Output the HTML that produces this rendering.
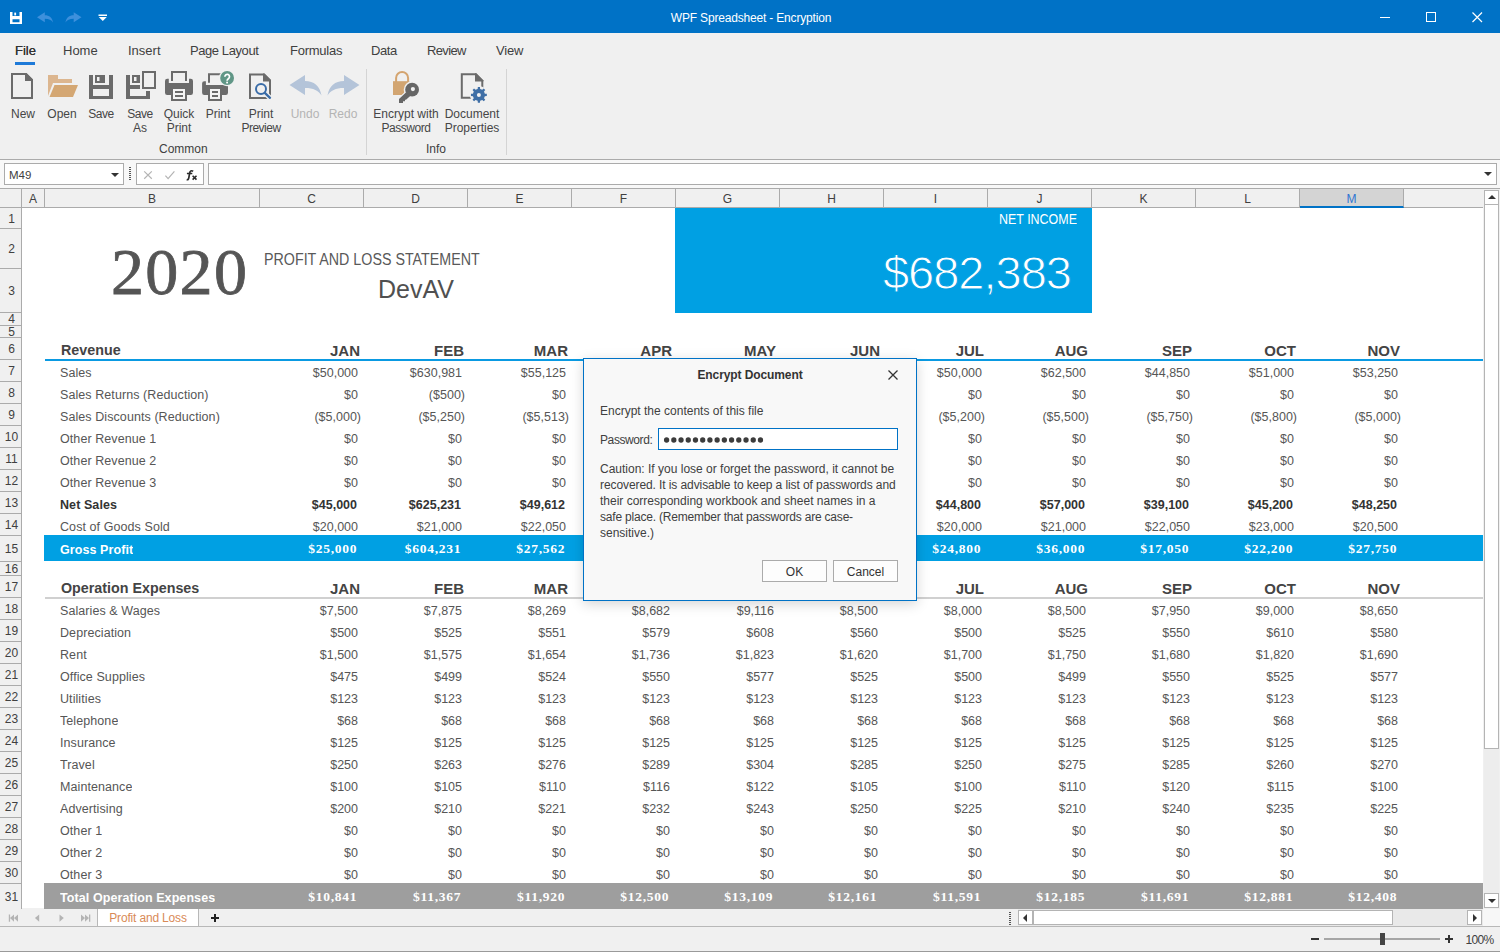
<!DOCTYPE html>
<html>
<head>
<meta charset="utf-8">
<title>WPF Spreadsheet - Encryption</title>
<style>
*{box-sizing:border-box;margin:0;padding:0}
html,body{width:1500px;height:952px;overflow:hidden;background:#f0f0f0}
body{font-family:"Liberation Sans",sans-serif;font-size:12px;color:#444;position:relative}
.abs{position:absolute}
/* title bar */
#title{position:absolute;left:0;top:0;width:1500px;height:33px;background:#0072c6}
#title .t{position:absolute;left:0;width:1502px;top:0;height:33px;line-height:36px;text-align:center;color:#fff;font-size:12px;letter-spacing:-0.180px}
/* ribbon */
#ribbon{position:absolute;left:0;top:33px;width:1500px;height:127px;background:#f0f0f0;border-bottom:1px solid #ababab}
.tab{position:absolute;top:43px;height:16px;line-height:16px;font-size:13px;color:#404040;white-space:nowrap}
.rl{position:absolute;top:107px;font-size:12px;line-height:14px;color:#464646;text-align:center;white-space:nowrap}
.rl.dis{color:#b4b4b4}
.gcap{position:absolute;top:142px;font-size:12px;line-height:14px;color:#404040;white-space:nowrap}
.gsep{position:absolute;top:69px;width:1px;height:86px;background:#d4d4d4}
/* formula bar */
#fbar{position:absolute;left:0;top:160px;width:1500px;height:29px;background:#f8f8f8}
.box{position:absolute;background:#fff;border:1px solid #ababab}
/* grid */
#sheet{position:absolute;left:21px;top:208px;width:1462px;height:700px;background:#fff}
.ch{position:absolute;top:188px;height:20px;line-height:20px;text-align:center;font-size:12px;color:#404040;border-top:1px solid #ababab;border-bottom:1px solid #ababab;border-right:1px solid #ababab;background:#f0f0f0}
.ch.sel{background:#d4d4d4;color:#2e75d2;border-bottom:2px solid #0072c6}
.rh{position:absolute;left:0;width:22px;text-align:center;font-size:12px;color:#404040;border-bottom:1px solid #ababab;border-right:1px solid #ababab;background:#f0f0f0;padding-left:2px;overflow:hidden}
.sec{position:absolute;left:61px;height:22px;line-height:26px;font-size:14.300px;font-weight:bold;color:#444;white-space:nowrap}
.mon{position:absolute;width:104px;height:22px;line-height:27px;font-size:15px;font-weight:bold;color:#444;text-align:right;padding-right:3px}
.lbl{position:absolute;left:60px;font-size:12.5px;letter-spacing:0.080px;color:#565656;white-space:nowrap;overflow:hidden}
.lbl.b{font-weight:bold;color:#333}
.lbl.gp,.lbl.tot{font-weight:bold;color:#fff;padding-top:1px}
.num{position:absolute;width:104px;text-align:right;font-size:12.5px;color:#565656;white-space:nowrap;overflow:hidden}
.num.b{font-weight:bold;color:#333}
.num.gp,.num.tot{font-family:"Liberation Serif",serif;font-weight:bold;color:#fff;font-size:13.500px;letter-spacing:0.720px}
.band{position:absolute;left:44px;width:1439px}
.band.gp{background:#00a0e3}
.band.tot{background:#9e9e9e}
.dt{font-size:12px;line-height:15px;color:#404040;white-space:nowrap}
.btn{width:65px;height:22px;line-height:23px;text-align:center;font-size:12px;color:#333;background:#fdfdfd;border:1px solid #ababab}
</style>
</head>
<body>
<!-- TITLE BAR -->
<div id="title">
  <div class="t">WPF Spreadsheet - Encryption</div>
  <svg class="abs" style="left:0;top:0" width="120" height="33" viewBox="0 0 120 33">
    <path d="M10 12h12v12h-12z M12.500 12v4h7v-4z M12.500 19.300h7v3h-7z" fill="#fff" fill-rule="evenodd"/>
    <rect x="14.300" y="12.600" width="1.800" height="2.800" fill="#fff"/>
    <path d="M37 17.300l7.800-5v3c4.500 0 7.500 2.500 8.200 7.200c-1.500-2.500-4-3.700-8.200-3.700v3.500z" fill="#3d90dc"/>
    <path d="M81.500 17.300l-7.800-5v3c-4.500 0-7.500 2.500-8.200 7.200c1.500-2.500 4-3.700 8.200-3.700v3.500z" fill="#3d90dc"/>
    <path d="M98.500 14.500h8.500v1.500h-8.500z M98.800 17h8l-4 4z" fill="#fff"/>
  </svg>
  <svg class="abs" style="left:1370px;top:0" width="130" height="33" viewBox="0 0 130 33">
    <path d="M10 17.500h10" stroke="#fff" stroke-width="1" fill="none"/>
    <rect x="56.500" y="12.500" width="9" height="9" stroke="#fff" stroke-width="1" fill="none"/>
    <path d="M102.500 12.500l9.500 9.500M112 12.500l-9.500 9.500" stroke="#fff" stroke-width="1.200" fill="none"/>
  </svg>
</div>

<!-- RIBBON -->
<div id="ribbon"></div>
<div class="tab" style="left:15px;color:#333;text-shadow:0 0 0.3px #333">File</div>
<div class="abs" style="left:15px;top:62px;width:20px;height:3px;background:#1e7ad8"></div>
<div class="tab" style="left:63px">Home</div>
<div class="tab" style="left:128px">Insert</div>
<div class="tab" style="left:190px;letter-spacing:-0.420px">Page Layout</div>
<div class="tab" style="left:290px;letter-spacing:-0.250px">Formulas</div>
<div class="tab" style="left:371px;letter-spacing:-0.400px">Data</div>
<div class="tab" style="left:427px;letter-spacing:-0.650px">Review</div>
<div class="tab" style="left:496px;letter-spacing:-0.150px">View</div>

<svg class="abs" style="left:0;top:0" width="520" height="110" viewBox="0 0 520 110">
  <!-- New -->
  <path d="M12 74h14l6 6v18h-20z" fill="none" stroke="#6b6b6b" stroke-width="2"/>
  <path d="M25 73h1.500l6.500 6.500v1.500h-8z" fill="#6b6b6b"/>
  <!-- Open -->
  <path d="M48 75h10v4h14v4h-19l-5 13z" fill="#dcb68f"/>
  <path d="M54.500 85h23.500l-5 12h-23.500z" fill="#d4a773"/>
  <!-- Save -->
  <g id="floppy">
  <path d="M89 75h24v24h-24z M93 75v10h16v-10z M93 89h16v7h-16z" fill="#6b6b6b" fill-rule="evenodd"/>
  <path d="M95 75h10v8h-10z M97 77v4h2.500v-4z" fill="#6b6b6b" fill-rule="evenodd"/>
  </g>
  <!-- Save As -->
  <path d="M126 75h24v24h-24z M130 75v10h16v-10z M130 89h16v7h-16z" fill="#6b6b6b" fill-rule="evenodd"/>
  <path d="M132 75h10v8h-10z M134 77v4h2.500v-4z" fill="#6b6b6b" fill-rule="evenodd"/>
  <rect x="140" y="69" width="18" height="22" fill="#f0f0f0"/>
  <rect x="143" y="72" width="12" height="16" fill="none" stroke="#6b6b6b" stroke-width="2"/>
  <!-- Quick Print -->
  <path d="M172 81v-9h14v9" fill="none" stroke="#6b6b6b" stroke-width="2"/>
  <path d="M167.200 78.800h1.600v4.200h20.200v-4.200h1.800a2.200 2.200 0 0 1 2.200 2.200v11.800a2.200 2.200 0 0 1 -2.200 2.200h-23.600a2.200 2.200 0 0 1 -2.200 -2.200v-11.800a2.200 2.200 0 0 1 2.200 -2.200z" fill="#6b6b6b"/>
  <path d="M171 89h16v12h-16z" fill="#6b6b6b"/>
  <path d="M173 89h12v10h-12z" fill="#f4f4f4"/>
  <path d="M175 92h8M175 96h8" stroke="#6b6b6b" stroke-width="2"/>
  <!-- Print -->
  <path d="M209 82.800v-8.600h13" fill="none" stroke="#6b6b6b" stroke-width="2"/>
  <path d="M204.300 81.200h1.600v3.800h22.100v7.800a2.200 2.200 0 0 1 -2.200 2.200h-21.500a2.200 2.200 0 0 1 -2.200 -2.200v-9.400a2.200 2.200 0 0 1 2.200 -2.200z" fill="#6b6b6b"/>
  <path d="M208 89h14v12h-14z" fill="#6b6b6b"/>
  <path d="M210 89h10v10h-10z" fill="#f4f4f4"/>
  <path d="M212 92h6M212 96h6" stroke="#6b6b6b" stroke-width="2"/>
  <circle cx="227.100" cy="78" r="8.300" fill="#f0f0f0"/>
  <circle cx="227.100" cy="78" r="6.900" fill="#609686"/>
  <path d="M224.900 76.700a2.300 2.300 0 1 1 3.700 1.800c-1 0.700-1.500 1.200-1.500 2.300" fill="none" stroke="#fff" stroke-width="1.700"/><rect x="226.200" y="81.700" width="1.800" height="1.700" fill="#fff"/>
  <!-- Print Preview -->
  <path d="M250 74.500h14l6 6v17.500h-20z" fill="none" stroke="#6b6b6b" stroke-width="2"/>
  <path d="M263 73.500h1.500l6.500 6.500v1.500h-8z" fill="#6b6b6b"/>
  <path d="M264 92l8 8" stroke="#f0f0f0" stroke-width="5"/>
  <circle cx="261" cy="89" r="5" fill="#f0f0f0" stroke="#3a6ca8" stroke-width="2"/>
  <path d="M264.800 92.800l5.200 5" stroke="#3a6ca8" stroke-width="2.300" stroke-linecap="round"/>
  <!-- Undo -->
  <path d="M289.500 85l15.500-10v6c9 0 15 5 16.500 14.500c-3-5-8-7.500-16.500-7.500v7z" fill="#b4c4d9"/>
  <!-- Redo -->
  <path d="M359.500 85l-15.500-10v6c-9 0-15 5-16.500 14.500c3-5 8-7.500 16.500-7.500v7z" fill="#b4c4d9"/>
  <!-- Encrypt -->
  <path d="M396.100 82v-4a6 6 0 0 1 12 0v4" fill="none" stroke="#d4a46f" stroke-width="2"/>
  <rect x="393" y="81.200" width="16.400" height="13.800" fill="#d2a571"/>
  <circle cx="412.100" cy="89.700" r="8.400" fill="#f0f0f0"/>
  <path d="M397.800 98.500l8.400-7.800l6 5l-5.600 5.400h-0.800v1.500h-2v2h-6z" fill="#f0f0f0"/>
  <circle cx="412.100" cy="89.700" r="6.900" fill="#666"/>
  <path d="M399 99l7.200-6.700l4.300 3.500l-4.500 3.900h-1v1.600h-2v1.700h-4z" fill="#666"/>
  <circle cx="412.900" cy="89.100" r="2.100" fill="#f0f0f0"/>
  <!-- Doc Properties -->
  <path d="M461.800 74.300h14l6.500 6.500v16.900h-20.500z" fill="none" stroke="#6b6b6b" stroke-width="2"/>
  <path d="M475 73.300h1.300l7 7v1.200h-8.300z" fill="#6b6b6b"/>
  <circle cx="478.900" cy="94.900" r="9" fill="#f0f0f0"/>
  <path d="M484.87 93.66 L486.83 93.84 L486.83 95.96 L484.87 96.14 L484.00 98.25 L485.26 99.75 L483.75 101.26 L482.25 100.00 L480.14 100.87 L479.96 102.83 L477.84 102.83 L477.66 100.87 L475.55 100.00 L474.05 101.26 L472.54 99.75 L473.80 98.25 L472.93 96.14 L470.97 95.96 L470.97 93.84 L472.93 93.66 L473.80 91.55 L472.54 90.05 L474.05 88.54 L475.55 89.80 L477.66 88.93 L477.84 86.97 L479.96 86.97 L480.14 88.93 L482.25 89.80 L483.75 88.54 L485.26 90.05 L484.00 91.55Z M476.90 94.90a2.0 2.0 0 1 0 4.0 0a2.0 2.0 0 1 0 -4.0 0Z" fill="#3f6fa6" fill-rule="evenodd"/>
</svg>
<!--ICONS_END-->
<div class="rl" style="left:3px;width:40px">New</div>
<div class="rl" style="left:42px;width:40px">Open</div>
<div class="rl" style="left:81px;width:40px;letter-spacing:-0.500px">Save</div>
<div class="rl" style="left:120px;width:40px"><span style="letter-spacing:-0.500px">Save</span><br>As</div>
<div class="rl" style="left:159px;width:40px">Quick<br>Print</div>
<div class="rl" style="left:198px;width:40px">Print</div>
<div class="rl" style="left:236px;width:50px">Print<br><span style="letter-spacing:-0.500px">Preview</span></div>
<div class="rl dis" style="left:285px;width:40px">Undo</div>
<div class="rl dis" style="left:323px;width:40px">Redo</div>
<div class="rl" style="left:366px;width:80px">Encrypt with<br><span style="letter-spacing:-0.450px">Password</span></div>
<div class="rl" style="left:432px;width:80px">Document<br>Properties</div>
<div class="gcap" style="left:159px">Common</div>
<div class="gcap" style="left:426px">Info</div>
<div class="gsep" style="left:366px"></div>
<div class="gsep" style="left:506px"></div>

<!-- FORMULA BAR -->
<div id="fbar"></div>
<div class="box" style="left:4px;top:163px;width:120px;height:22px"></div>
<div class="abs" style="left:9px;top:167.500px;font-size:11.500px;line-height:15px;color:#404040">M49</div>
<div class="abs" style="left:111px;top:173px;width:0;height:0;border-left:4px solid transparent;border-right:4px solid transparent;border-top:4px solid #333"></div>
<div class="abs" style="left:129px;top:167px;width:2px;height:13px;background:repeating-linear-gradient(#555 0 1px,transparent 1px 2px)"></div>
<div class="box" style="left:136px;top:163px;width:68px;height:22px"></div>
<div class="box" style="left:208px;top:163px;width:1289px;height:22px"></div>
<div class="abs" style="left:1484px;top:172px;width:0;height:0;border-left:4px solid transparent;border-right:4px solid transparent;border-top:4px solid #333"></div>
<svg class="abs" style="left:136px;top:163px" width="68" height="23" viewBox="0 0 68 23">
  <path d="M8.200 8.400l7.600 7.400M15.800 8.400l-7.600 7.400" stroke="#b4b4b4" stroke-width="1.200" fill="none"/>
  <path d="M29.400 12.700l2.700 2.900l6.300-7.300" stroke="#b4b4b4" stroke-width="1.200" fill="none"/>
  <path d="M57.200 8.200c-1.900-1-3.200-0.200-3.500 1.700l-0.900 5c-0.300 1.700-1 2.100-2.100 1.600" stroke="#2b2b2b" stroke-width="1.700" fill="none"/>
  <path d="M50.900 10.500h5.400" stroke="#2b2b2b" stroke-width="1.500" fill="none"/>
  <path d="M56.600 12.800l3.900 3.800M60.500 12.800l-3.900 3.800" stroke="#2b2b2b" stroke-width="1.600" fill="none"/>
</svg>

<!-- GRID -->
<div class="abs" style="left:0;top:188px;width:1500px;height:20px;background:#f0f0f0;border-top:1px solid #ababab;border-bottom:1px solid #ababab"></div>
<div class="abs" style="left:0;top:188px;width:22px;height:20px;border-right:1px solid #ababab"></div>
<div id="sheet"></div>
<div class="ch" style="left:22px;width:23px">A</div>
<div class="ch" style="left:45px;width:215px">B</div>
<div class="ch" style="left:260px;width:104px">C</div>
<div class="ch" style="left:364px;width:104px">D</div>
<div class="ch" style="left:468px;width:104px">E</div>
<div class="ch" style="left:572px;width:104px">F</div>
<div class="ch" style="left:676px;width:104px">G</div>
<div class="ch" style="left:780px;width:104px">H</div>
<div class="ch" style="left:884px;width:104px">I</div>
<div class="ch" style="left:988px;width:104px">J</div>
<div class="ch" style="left:1092px;width:104px">K</div>
<div class="ch" style="left:1196px;width:104px">L</div>
<div class="ch sel" style="left:1300px;width:104px">M</div>
<div class="rh" style="top:208px;height:21px;line-height:23px">1</div>
<div class="rh" style="top:229px;height:40px;line-height:40px">2</div>
<div class="rh" style="top:269px;height:44px;line-height:44px">3</div>
<div class="rh" style="top:313px;height:13px;line-height:13px">4</div>
<div class="rh" style="top:326px;height:12px;line-height:12px">5</div>
<div class="rh" style="top:338px;height:22px;line-height:22px">6</div>
<div class="rh" style="top:360px;height:22px;line-height:22px">7</div>
<div class="rh" style="top:382px;height:22px;line-height:22px">8</div>
<div class="rh" style="top:404px;height:22px;line-height:22px">9</div>
<div class="rh" style="top:426px;height:22px;line-height:22px">10</div>
<div class="rh" style="top:448px;height:22px;line-height:22px">11</div>
<div class="rh" style="top:470px;height:22px;line-height:22px">12</div>
<div class="rh" style="top:492px;height:22px;line-height:22px">13</div>
<div class="rh" style="top:514px;height:22px;line-height:22px">14</div>
<div class="rh" style="top:536px;height:26px;line-height:26px">15</div>
<div class="rh" style="top:562px;height:14px;line-height:14px">16</div>
<div class="rh" style="top:576px;height:22px;line-height:22px">17</div>
<div class="rh" style="top:598px;height:22px;line-height:22px">18</div>
<div class="rh" style="top:620px;height:22px;line-height:22px">19</div>
<div class="rh" style="top:642px;height:22px;line-height:22px">20</div>
<div class="rh" style="top:664px;height:22px;line-height:22px">21</div>
<div class="rh" style="top:686px;height:22px;line-height:22px">22</div>
<div class="rh" style="top:708px;height:22px;line-height:22px">23</div>
<div class="rh" style="top:730px;height:22px;line-height:22px">24</div>
<div class="rh" style="top:752px;height:22px;line-height:22px">25</div>
<div class="rh" style="top:774px;height:22px;line-height:22px">26</div>
<div class="rh" style="top:796px;height:22px;line-height:22px">27</div>
<div class="rh" style="top:818px;height:22px;line-height:22px">28</div>
<div class="rh" style="top:840px;height:22px;line-height:22px">29</div>
<div class="rh" style="top:862px;height:22px;line-height:22px">30</div>
<div class="rh" style="top:884px;height:26px;line-height:26px">31</div>
<div class="sec" style="top:337px">Revenue</div>
<div class="mon" style="top:337px;left:259px">JAN</div>
<div class="mon" style="top:337px;left:363px">FEB</div>
<div class="mon" style="top:337px;left:467px">MAR</div>
<div class="mon" style="top:337px;left:571px">APR</div>
<div class="mon" style="top:337px;left:675px">MAY</div>
<div class="mon" style="top:337px;left:779px">JUN</div>
<div class="mon" style="top:337px;left:883px">JUL</div>
<div class="mon" style="top:337px;left:987px">AUG</div>
<div class="mon" style="top:337px;left:1091px">SEP</div>
<div class="mon" style="top:337px;left:1195px">OCT</div>
<div class="mon" style="top:337px;left:1299px">NOV</div>
<div class="sec" style="top:575px">Operation Expenses</div>
<div class="mon" style="top:575px;left:259px">JAN</div>
<div class="mon" style="top:575px;left:363px">FEB</div>
<div class="mon" style="top:575px;left:467px">MAR</div>
<div class="mon" style="top:575px;left:571px">APR</div>
<div class="mon" style="top:575px;left:675px">MAY</div>
<div class="mon" style="top:575px;left:779px">JUN</div>
<div class="mon" style="top:575px;left:883px">JUL</div>
<div class="mon" style="top:575px;left:987px">AUG</div>
<div class="mon" style="top:575px;left:1091px">SEP</div>
<div class="mon" style="top:575px;left:1195px">OCT</div>
<div class="mon" style="top:575px;left:1299px">NOV</div>
<div class="lbl " style="top:359px;height:22px;line-height:29px">Sales</div>
<div class="num " style="top:359px;height:22px;line-height:29px;left:259px;padding-right:5px">$50,000</div>
<div class="num " style="top:359px;height:22px;line-height:29px;left:363px;padding-right:5px">$630,981</div>
<div class="num " style="top:359px;height:22px;line-height:29px;left:467px;padding-right:5px">$55,125</div>
<div class="num " style="top:359px;height:22px;line-height:29px;left:571px;padding-right:5px">$57,881</div>
<div class="num " style="top:359px;height:22px;line-height:29px;left:675px;padding-right:5px">$60,775</div>
<div class="num " style="top:359px;height:22px;line-height:29px;left:779px;padding-right:5px">$63,814</div>
<div class="num " style="top:359px;height:22px;line-height:29px;left:883px;padding-right:5px">$50,000</div>
<div class="num " style="top:359px;height:22px;line-height:29px;left:987px;padding-right:5px">$62,500</div>
<div class="num " style="top:359px;height:22px;line-height:29px;left:1091px;padding-right:5px">$44,850</div>
<div class="num " style="top:359px;height:22px;line-height:29px;left:1195px;padding-right:5px">$51,000</div>
<div class="num " style="top:359px;height:22px;line-height:29px;left:1299px;padding-right:5px">$53,250</div>
<div class="lbl " style="top:381px;height:22px;line-height:29px">Sales Returns (Reduction)</div>
<div class="num " style="top:381px;height:22px;line-height:29px;left:259px;padding-right:5px">$0</div>
<div class="num " style="top:381px;height:22px;line-height:29px;left:363px;padding-right:2px">($500)</div>
<div class="num " style="top:381px;height:22px;line-height:29px;left:467px;padding-right:5px">$0</div>
<div class="num " style="top:381px;height:22px;line-height:29px;left:571px;padding-right:5px">$0</div>
<div class="num " style="top:381px;height:22px;line-height:29px;left:675px;padding-right:5px">$0</div>
<div class="num " style="top:381px;height:22px;line-height:29px;left:779px;padding-right:5px">$0</div>
<div class="num " style="top:381px;height:22px;line-height:29px;left:883px;padding-right:5px">$0</div>
<div class="num " style="top:381px;height:22px;line-height:29px;left:987px;padding-right:5px">$0</div>
<div class="num " style="top:381px;height:22px;line-height:29px;left:1091px;padding-right:5px">$0</div>
<div class="num " style="top:381px;height:22px;line-height:29px;left:1195px;padding-right:5px">$0</div>
<div class="num " style="top:381px;height:22px;line-height:29px;left:1299px;padding-right:5px">$0</div>
<div class="lbl " style="top:403px;height:22px;line-height:29px">Sales Discounts (Reduction)</div>
<div class="num " style="top:403px;height:22px;line-height:29px;left:259px;padding-right:2px">($5,000)</div>
<div class="num " style="top:403px;height:22px;line-height:29px;left:363px;padding-right:2px">($5,250)</div>
<div class="num " style="top:403px;height:22px;line-height:29px;left:467px;padding-right:2px">($5,513)</div>
<div class="num " style="top:403px;height:22px;line-height:29px;left:571px;padding-right:2px">($5,788)</div>
<div class="num " style="top:403px;height:22px;line-height:29px;left:675px;padding-right:2px">($6,078)</div>
<div class="num " style="top:403px;height:22px;line-height:29px;left:779px;padding-right:2px">($6,381)</div>
<div class="num " style="top:403px;height:22px;line-height:29px;left:883px;padding-right:2px">($5,200)</div>
<div class="num " style="top:403px;height:22px;line-height:29px;left:987px;padding-right:2px">($5,500)</div>
<div class="num " style="top:403px;height:22px;line-height:29px;left:1091px;padding-right:2px">($5,750)</div>
<div class="num " style="top:403px;height:22px;line-height:29px;left:1195px;padding-right:2px">($5,800)</div>
<div class="num " style="top:403px;height:22px;line-height:29px;left:1299px;padding-right:2px">($5,000)</div>
<div class="lbl " style="top:425px;height:22px;line-height:29px">Other Revenue 1</div>
<div class="num " style="top:425px;height:22px;line-height:29px;left:259px;padding-right:5px">$0</div>
<div class="num " style="top:425px;height:22px;line-height:29px;left:363px;padding-right:5px">$0</div>
<div class="num " style="top:425px;height:22px;line-height:29px;left:467px;padding-right:5px">$0</div>
<div class="num " style="top:425px;height:22px;line-height:29px;left:571px;padding-right:5px">$0</div>
<div class="num " style="top:425px;height:22px;line-height:29px;left:675px;padding-right:5px">$0</div>
<div class="num " style="top:425px;height:22px;line-height:29px;left:779px;padding-right:5px">$0</div>
<div class="num " style="top:425px;height:22px;line-height:29px;left:883px;padding-right:5px">$0</div>
<div class="num " style="top:425px;height:22px;line-height:29px;left:987px;padding-right:5px">$0</div>
<div class="num " style="top:425px;height:22px;line-height:29px;left:1091px;padding-right:5px">$0</div>
<div class="num " style="top:425px;height:22px;line-height:29px;left:1195px;padding-right:5px">$0</div>
<div class="num " style="top:425px;height:22px;line-height:29px;left:1299px;padding-right:5px">$0</div>
<div class="lbl " style="top:447px;height:22px;line-height:29px">Other Revenue 2</div>
<div class="num " style="top:447px;height:22px;line-height:29px;left:259px;padding-right:5px">$0</div>
<div class="num " style="top:447px;height:22px;line-height:29px;left:363px;padding-right:5px">$0</div>
<div class="num " style="top:447px;height:22px;line-height:29px;left:467px;padding-right:5px">$0</div>
<div class="num " style="top:447px;height:22px;line-height:29px;left:571px;padding-right:5px">$0</div>
<div class="num " style="top:447px;height:22px;line-height:29px;left:675px;padding-right:5px">$0</div>
<div class="num " style="top:447px;height:22px;line-height:29px;left:779px;padding-right:5px">$0</div>
<div class="num " style="top:447px;height:22px;line-height:29px;left:883px;padding-right:5px">$0</div>
<div class="num " style="top:447px;height:22px;line-height:29px;left:987px;padding-right:5px">$0</div>
<div class="num " style="top:447px;height:22px;line-height:29px;left:1091px;padding-right:5px">$0</div>
<div class="num " style="top:447px;height:22px;line-height:29px;left:1195px;padding-right:5px">$0</div>
<div class="num " style="top:447px;height:22px;line-height:29px;left:1299px;padding-right:5px">$0</div>
<div class="lbl " style="top:469px;height:22px;line-height:29px">Other Revenue 3</div>
<div class="num " style="top:469px;height:22px;line-height:29px;left:259px;padding-right:5px">$0</div>
<div class="num " style="top:469px;height:22px;line-height:29px;left:363px;padding-right:5px">$0</div>
<div class="num " style="top:469px;height:22px;line-height:29px;left:467px;padding-right:5px">$0</div>
<div class="num " style="top:469px;height:22px;line-height:29px;left:571px;padding-right:5px">$0</div>
<div class="num " style="top:469px;height:22px;line-height:29px;left:675px;padding-right:5px">$0</div>
<div class="num " style="top:469px;height:22px;line-height:29px;left:779px;padding-right:5px">$0</div>
<div class="num " style="top:469px;height:22px;line-height:29px;left:883px;padding-right:5px">$0</div>
<div class="num " style="top:469px;height:22px;line-height:29px;left:987px;padding-right:5px">$0</div>
<div class="num " style="top:469px;height:22px;line-height:29px;left:1091px;padding-right:5px">$0</div>
<div class="num " style="top:469px;height:22px;line-height:29px;left:1195px;padding-right:5px">$0</div>
<div class="num " style="top:469px;height:22px;line-height:29px;left:1299px;padding-right:5px">$0</div>
<div class="lbl b" style="top:491px;height:22px;line-height:29px">Net Sales</div>
<div class="num b" style="top:491px;height:22px;line-height:29px;left:259px;padding-right:6px">$45,000</div>
<div class="num b" style="top:491px;height:22px;line-height:29px;left:363px;padding-right:6px">$625,231</div>
<div class="num b" style="top:491px;height:22px;line-height:29px;left:467px;padding-right:6px">$49,612</div>
<div class="num b" style="top:491px;height:22px;line-height:29px;left:571px;padding-right:6px">$52,093</div>
<div class="num b" style="top:491px;height:22px;line-height:29px;left:675px;padding-right:6px">$54,697</div>
<div class="num b" style="top:491px;height:22px;line-height:29px;left:779px;padding-right:6px">$57,433</div>
<div class="num b" style="top:491px;height:22px;line-height:29px;left:883px;padding-right:6px">$44,800</div>
<div class="num b" style="top:491px;height:22px;line-height:29px;left:987px;padding-right:6px">$57,000</div>
<div class="num b" style="top:491px;height:22px;line-height:29px;left:1091px;padding-right:6px">$39,100</div>
<div class="num b" style="top:491px;height:22px;line-height:29px;left:1195px;padding-right:6px">$45,200</div>
<div class="num b" style="top:491px;height:22px;line-height:29px;left:1299px;padding-right:6px">$48,250</div>
<div class="lbl " style="top:513px;height:22px;line-height:29px">Cost of Goods Sold</div>
<div class="num " style="top:513px;height:22px;line-height:29px;left:259px;padding-right:5px">$20,000</div>
<div class="num " style="top:513px;height:22px;line-height:29px;left:363px;padding-right:5px">$21,000</div>
<div class="num " style="top:513px;height:22px;line-height:29px;left:467px;padding-right:5px">$22,050</div>
<div class="num " style="top:513px;height:22px;line-height:29px;left:571px;padding-right:5px">$23,153</div>
<div class="num " style="top:513px;height:22px;line-height:29px;left:675px;padding-right:5px">$24,310</div>
<div class="num " style="top:513px;height:22px;line-height:29px;left:779px;padding-right:5px">$25,526</div>
<div class="num " style="top:513px;height:22px;line-height:29px;left:883px;padding-right:5px">$20,000</div>
<div class="num " style="top:513px;height:22px;line-height:29px;left:987px;padding-right:5px">$21,000</div>
<div class="num " style="top:513px;height:22px;line-height:29px;left:1091px;padding-right:5px">$22,050</div>
<div class="num " style="top:513px;height:22px;line-height:29px;left:1195px;padding-right:5px">$23,000</div>
<div class="num " style="top:513px;height:22px;line-height:29px;left:1299px;padding-right:5px">$20,500</div>
<div class="band gp" style="top:535px;height:26px"></div>
<div class="lbl gp" style="top:535px;height:26px;line-height:28px">Gross Profit</div>
<div class="num gp" style="top:535px;height:26px;line-height:28px;left:259px;padding-right:5.8px">$25,000</div>
<div class="num gp" style="top:535px;height:26px;line-height:28px;left:363px;padding-right:5.8px">$604,231</div>
<div class="num gp" style="top:535px;height:26px;line-height:28px;left:467px;padding-right:5.8px">$27,562</div>
<div class="num gp" style="top:535px;height:26px;line-height:28px;left:571px;padding-right:5.8px">$28,940</div>
<div class="num gp" style="top:535px;height:26px;line-height:28px;left:675px;padding-right:5.8px">$30,387</div>
<div class="num gp" style="top:535px;height:26px;line-height:28px;left:779px;padding-right:5.8px">$31,907</div>
<div class="num gp" style="top:535px;height:26px;line-height:28px;left:883px;padding-right:5.8px">$24,800</div>
<div class="num gp" style="top:535px;height:26px;line-height:28px;left:987px;padding-right:5.8px">$36,000</div>
<div class="num gp" style="top:535px;height:26px;line-height:28px;left:1091px;padding-right:5.8px">$17,050</div>
<div class="num gp" style="top:535px;height:26px;line-height:28px;left:1195px;padding-right:5.8px">$22,200</div>
<div class="num gp" style="top:535px;height:26px;line-height:28px;left:1299px;padding-right:5.8px">$27,750</div>
<div class="lbl " style="top:597px;height:22px;line-height:29px">Salaries &amp; Wages</div>
<div class="num " style="top:597px;height:22px;line-height:29px;left:259px;padding-right:5px">$7,500</div>
<div class="num " style="top:597px;height:22px;line-height:29px;left:363px;padding-right:5px">$7,875</div>
<div class="num " style="top:597px;height:22px;line-height:29px;left:467px;padding-right:5px">$8,269</div>
<div class="num " style="top:597px;height:22px;line-height:29px;left:571px;padding-right:5px">$8,682</div>
<div class="num " style="top:597px;height:22px;line-height:29px;left:675px;padding-right:5px">$9,116</div>
<div class="num " style="top:597px;height:22px;line-height:29px;left:779px;padding-right:5px">$8,500</div>
<div class="num " style="top:597px;height:22px;line-height:29px;left:883px;padding-right:5px">$8,000</div>
<div class="num " style="top:597px;height:22px;line-height:29px;left:987px;padding-right:5px">$8,500</div>
<div class="num " style="top:597px;height:22px;line-height:29px;left:1091px;padding-right:5px">$7,950</div>
<div class="num " style="top:597px;height:22px;line-height:29px;left:1195px;padding-right:5px">$9,000</div>
<div class="num " style="top:597px;height:22px;line-height:29px;left:1299px;padding-right:5px">$8,650</div>
<div class="lbl " style="top:619px;height:22px;line-height:29px">Depreciation</div>
<div class="num " style="top:619px;height:22px;line-height:29px;left:259px;padding-right:5px">$500</div>
<div class="num " style="top:619px;height:22px;line-height:29px;left:363px;padding-right:5px">$525</div>
<div class="num " style="top:619px;height:22px;line-height:29px;left:467px;padding-right:5px">$551</div>
<div class="num " style="top:619px;height:22px;line-height:29px;left:571px;padding-right:5px">$579</div>
<div class="num " style="top:619px;height:22px;line-height:29px;left:675px;padding-right:5px">$608</div>
<div class="num " style="top:619px;height:22px;line-height:29px;left:779px;padding-right:5px">$560</div>
<div class="num " style="top:619px;height:22px;line-height:29px;left:883px;padding-right:5px">$500</div>
<div class="num " style="top:619px;height:22px;line-height:29px;left:987px;padding-right:5px">$525</div>
<div class="num " style="top:619px;height:22px;line-height:29px;left:1091px;padding-right:5px">$550</div>
<div class="num " style="top:619px;height:22px;line-height:29px;left:1195px;padding-right:5px">$610</div>
<div class="num " style="top:619px;height:22px;line-height:29px;left:1299px;padding-right:5px">$580</div>
<div class="lbl " style="top:641px;height:22px;line-height:29px">Rent</div>
<div class="num " style="top:641px;height:22px;line-height:29px;left:259px;padding-right:5px">$1,500</div>
<div class="num " style="top:641px;height:22px;line-height:29px;left:363px;padding-right:5px">$1,575</div>
<div class="num " style="top:641px;height:22px;line-height:29px;left:467px;padding-right:5px">$1,654</div>
<div class="num " style="top:641px;height:22px;line-height:29px;left:571px;padding-right:5px">$1,736</div>
<div class="num " style="top:641px;height:22px;line-height:29px;left:675px;padding-right:5px">$1,823</div>
<div class="num " style="top:641px;height:22px;line-height:29px;left:779px;padding-right:5px">$1,620</div>
<div class="num " style="top:641px;height:22px;line-height:29px;left:883px;padding-right:5px">$1,700</div>
<div class="num " style="top:641px;height:22px;line-height:29px;left:987px;padding-right:5px">$1,750</div>
<div class="num " style="top:641px;height:22px;line-height:29px;left:1091px;padding-right:5px">$1,680</div>
<div class="num " style="top:641px;height:22px;line-height:29px;left:1195px;padding-right:5px">$1,820</div>
<div class="num " style="top:641px;height:22px;line-height:29px;left:1299px;padding-right:5px">$1,690</div>
<div class="lbl " style="top:663px;height:22px;line-height:29px">Office Supplies</div>
<div class="num " style="top:663px;height:22px;line-height:29px;left:259px;padding-right:5px">$475</div>
<div class="num " style="top:663px;height:22px;line-height:29px;left:363px;padding-right:5px">$499</div>
<div class="num " style="top:663px;height:22px;line-height:29px;left:467px;padding-right:5px">$524</div>
<div class="num " style="top:663px;height:22px;line-height:29px;left:571px;padding-right:5px">$550</div>
<div class="num " style="top:663px;height:22px;line-height:29px;left:675px;padding-right:5px">$577</div>
<div class="num " style="top:663px;height:22px;line-height:29px;left:779px;padding-right:5px">$525</div>
<div class="num " style="top:663px;height:22px;line-height:29px;left:883px;padding-right:5px">$500</div>
<div class="num " style="top:663px;height:22px;line-height:29px;left:987px;padding-right:5px">$499</div>
<div class="num " style="top:663px;height:22px;line-height:29px;left:1091px;padding-right:5px">$550</div>
<div class="num " style="top:663px;height:22px;line-height:29px;left:1195px;padding-right:5px">$525</div>
<div class="num " style="top:663px;height:22px;line-height:29px;left:1299px;padding-right:5px">$577</div>
<div class="lbl " style="top:685px;height:22px;line-height:29px">Utilities</div>
<div class="num " style="top:685px;height:22px;line-height:29px;left:259px;padding-right:5px">$123</div>
<div class="num " style="top:685px;height:22px;line-height:29px;left:363px;padding-right:5px">$123</div>
<div class="num " style="top:685px;height:22px;line-height:29px;left:467px;padding-right:5px">$123</div>
<div class="num " style="top:685px;height:22px;line-height:29px;left:571px;padding-right:5px">$123</div>
<div class="num " style="top:685px;height:22px;line-height:29px;left:675px;padding-right:5px">$123</div>
<div class="num " style="top:685px;height:22px;line-height:29px;left:779px;padding-right:5px">$123</div>
<div class="num " style="top:685px;height:22px;line-height:29px;left:883px;padding-right:5px">$123</div>
<div class="num " style="top:685px;height:22px;line-height:29px;left:987px;padding-right:5px">$123</div>
<div class="num " style="top:685px;height:22px;line-height:29px;left:1091px;padding-right:5px">$123</div>
<div class="num " style="top:685px;height:22px;line-height:29px;left:1195px;padding-right:5px">$123</div>
<div class="num " style="top:685px;height:22px;line-height:29px;left:1299px;padding-right:5px">$123</div>
<div class="lbl " style="top:707px;height:22px;line-height:29px">Telephone</div>
<div class="num " style="top:707px;height:22px;line-height:29px;left:259px;padding-right:5px">$68</div>
<div class="num " style="top:707px;height:22px;line-height:29px;left:363px;padding-right:5px">$68</div>
<div class="num " style="top:707px;height:22px;line-height:29px;left:467px;padding-right:5px">$68</div>
<div class="num " style="top:707px;height:22px;line-height:29px;left:571px;padding-right:5px">$68</div>
<div class="num " style="top:707px;height:22px;line-height:29px;left:675px;padding-right:5px">$68</div>
<div class="num " style="top:707px;height:22px;line-height:29px;left:779px;padding-right:5px">$68</div>
<div class="num " style="top:707px;height:22px;line-height:29px;left:883px;padding-right:5px">$68</div>
<div class="num " style="top:707px;height:22px;line-height:29px;left:987px;padding-right:5px">$68</div>
<div class="num " style="top:707px;height:22px;line-height:29px;left:1091px;padding-right:5px">$68</div>
<div class="num " style="top:707px;height:22px;line-height:29px;left:1195px;padding-right:5px">$68</div>
<div class="num " style="top:707px;height:22px;line-height:29px;left:1299px;padding-right:5px">$68</div>
<div class="lbl " style="top:729px;height:22px;line-height:29px">Insurance</div>
<div class="num " style="top:729px;height:22px;line-height:29px;left:259px;padding-right:5px">$125</div>
<div class="num " style="top:729px;height:22px;line-height:29px;left:363px;padding-right:5px">$125</div>
<div class="num " style="top:729px;height:22px;line-height:29px;left:467px;padding-right:5px">$125</div>
<div class="num " style="top:729px;height:22px;line-height:29px;left:571px;padding-right:5px">$125</div>
<div class="num " style="top:729px;height:22px;line-height:29px;left:675px;padding-right:5px">$125</div>
<div class="num " style="top:729px;height:22px;line-height:29px;left:779px;padding-right:5px">$125</div>
<div class="num " style="top:729px;height:22px;line-height:29px;left:883px;padding-right:5px">$125</div>
<div class="num " style="top:729px;height:22px;line-height:29px;left:987px;padding-right:5px">$125</div>
<div class="num " style="top:729px;height:22px;line-height:29px;left:1091px;padding-right:5px">$125</div>
<div class="num " style="top:729px;height:22px;line-height:29px;left:1195px;padding-right:5px">$125</div>
<div class="num " style="top:729px;height:22px;line-height:29px;left:1299px;padding-right:5px">$125</div>
<div class="lbl " style="top:751px;height:22px;line-height:29px">Travel</div>
<div class="num " style="top:751px;height:22px;line-height:29px;left:259px;padding-right:5px">$250</div>
<div class="num " style="top:751px;height:22px;line-height:29px;left:363px;padding-right:5px">$263</div>
<div class="num " style="top:751px;height:22px;line-height:29px;left:467px;padding-right:5px">$276</div>
<div class="num " style="top:751px;height:22px;line-height:29px;left:571px;padding-right:5px">$289</div>
<div class="num " style="top:751px;height:22px;line-height:29px;left:675px;padding-right:5px">$304</div>
<div class="num " style="top:751px;height:22px;line-height:29px;left:779px;padding-right:5px">$285</div>
<div class="num " style="top:751px;height:22px;line-height:29px;left:883px;padding-right:5px">$250</div>
<div class="num " style="top:751px;height:22px;line-height:29px;left:987px;padding-right:5px">$275</div>
<div class="num " style="top:751px;height:22px;line-height:29px;left:1091px;padding-right:5px">$285</div>
<div class="num " style="top:751px;height:22px;line-height:29px;left:1195px;padding-right:5px">$260</div>
<div class="num " style="top:751px;height:22px;line-height:29px;left:1299px;padding-right:5px">$270</div>
<div class="lbl " style="top:773px;height:22px;line-height:29px">Maintenance</div>
<div class="num " style="top:773px;height:22px;line-height:29px;left:259px;padding-right:5px">$100</div>
<div class="num " style="top:773px;height:22px;line-height:29px;left:363px;padding-right:5px">$105</div>
<div class="num " style="top:773px;height:22px;line-height:29px;left:467px;padding-right:5px">$110</div>
<div class="num " style="top:773px;height:22px;line-height:29px;left:571px;padding-right:5px">$116</div>
<div class="num " style="top:773px;height:22px;line-height:29px;left:675px;padding-right:5px">$122</div>
<div class="num " style="top:773px;height:22px;line-height:29px;left:779px;padding-right:5px">$105</div>
<div class="num " style="top:773px;height:22px;line-height:29px;left:883px;padding-right:5px">$100</div>
<div class="num " style="top:773px;height:22px;line-height:29px;left:987px;padding-right:5px">$110</div>
<div class="num " style="top:773px;height:22px;line-height:29px;left:1091px;padding-right:5px">$120</div>
<div class="num " style="top:773px;height:22px;line-height:29px;left:1195px;padding-right:5px">$115</div>
<div class="num " style="top:773px;height:22px;line-height:29px;left:1299px;padding-right:5px">$100</div>
<div class="lbl " style="top:795px;height:22px;line-height:29px">Advertising</div>
<div class="num " style="top:795px;height:22px;line-height:29px;left:259px;padding-right:5px">$200</div>
<div class="num " style="top:795px;height:22px;line-height:29px;left:363px;padding-right:5px">$210</div>
<div class="num " style="top:795px;height:22px;line-height:29px;left:467px;padding-right:5px">$221</div>
<div class="num " style="top:795px;height:22px;line-height:29px;left:571px;padding-right:5px">$232</div>
<div class="num " style="top:795px;height:22px;line-height:29px;left:675px;padding-right:5px">$243</div>
<div class="num " style="top:795px;height:22px;line-height:29px;left:779px;padding-right:5px">$250</div>
<div class="num " style="top:795px;height:22px;line-height:29px;left:883px;padding-right:5px">$225</div>
<div class="num " style="top:795px;height:22px;line-height:29px;left:987px;padding-right:5px">$210</div>
<div class="num " style="top:795px;height:22px;line-height:29px;left:1091px;padding-right:5px">$240</div>
<div class="num " style="top:795px;height:22px;line-height:29px;left:1195px;padding-right:5px">$235</div>
<div class="num " style="top:795px;height:22px;line-height:29px;left:1299px;padding-right:5px">$225</div>
<div class="lbl " style="top:817px;height:22px;line-height:29px">Other 1</div>
<div class="num " style="top:817px;height:22px;line-height:29px;left:259px;padding-right:5px">$0</div>
<div class="num " style="top:817px;height:22px;line-height:29px;left:363px;padding-right:5px">$0</div>
<div class="num " style="top:817px;height:22px;line-height:29px;left:467px;padding-right:5px">$0</div>
<div class="num " style="top:817px;height:22px;line-height:29px;left:571px;padding-right:5px">$0</div>
<div class="num " style="top:817px;height:22px;line-height:29px;left:675px;padding-right:5px">$0</div>
<div class="num " style="top:817px;height:22px;line-height:29px;left:779px;padding-right:5px">$0</div>
<div class="num " style="top:817px;height:22px;line-height:29px;left:883px;padding-right:5px">$0</div>
<div class="num " style="top:817px;height:22px;line-height:29px;left:987px;padding-right:5px">$0</div>
<div class="num " style="top:817px;height:22px;line-height:29px;left:1091px;padding-right:5px">$0</div>
<div class="num " style="top:817px;height:22px;line-height:29px;left:1195px;padding-right:5px">$0</div>
<div class="num " style="top:817px;height:22px;line-height:29px;left:1299px;padding-right:5px">$0</div>
<div class="lbl " style="top:839px;height:22px;line-height:29px">Other 2</div>
<div class="num " style="top:839px;height:22px;line-height:29px;left:259px;padding-right:5px">$0</div>
<div class="num " style="top:839px;height:22px;line-height:29px;left:363px;padding-right:5px">$0</div>
<div class="num " style="top:839px;height:22px;line-height:29px;left:467px;padding-right:5px">$0</div>
<div class="num " style="top:839px;height:22px;line-height:29px;left:571px;padding-right:5px">$0</div>
<div class="num " style="top:839px;height:22px;line-height:29px;left:675px;padding-right:5px">$0</div>
<div class="num " style="top:839px;height:22px;line-height:29px;left:779px;padding-right:5px">$0</div>
<div class="num " style="top:839px;height:22px;line-height:29px;left:883px;padding-right:5px">$0</div>
<div class="num " style="top:839px;height:22px;line-height:29px;left:987px;padding-right:5px">$0</div>
<div class="num " style="top:839px;height:22px;line-height:29px;left:1091px;padding-right:5px">$0</div>
<div class="num " style="top:839px;height:22px;line-height:29px;left:1195px;padding-right:5px">$0</div>
<div class="num " style="top:839px;height:22px;line-height:29px;left:1299px;padding-right:5px">$0</div>
<div class="lbl " style="top:861px;height:22px;line-height:29px">Other 3</div>
<div class="num " style="top:861px;height:22px;line-height:29px;left:259px;padding-right:5px">$0</div>
<div class="num " style="top:861px;height:22px;line-height:29px;left:363px;padding-right:5px">$0</div>
<div class="num " style="top:861px;height:22px;line-height:29px;left:467px;padding-right:5px">$0</div>
<div class="num " style="top:861px;height:22px;line-height:29px;left:571px;padding-right:5px">$0</div>
<div class="num " style="top:861px;height:22px;line-height:29px;left:675px;padding-right:5px">$0</div>
<div class="num " style="top:861px;height:22px;line-height:29px;left:779px;padding-right:5px">$0</div>
<div class="num " style="top:861px;height:22px;line-height:29px;left:883px;padding-right:5px">$0</div>
<div class="num " style="top:861px;height:22px;line-height:29px;left:987px;padding-right:5px">$0</div>
<div class="num " style="top:861px;height:22px;line-height:29px;left:1091px;padding-right:5px">$0</div>
<div class="num " style="top:861px;height:22px;line-height:29px;left:1195px;padding-right:5px">$0</div>
<div class="num " style="top:861px;height:22px;line-height:29px;left:1299px;padding-right:5px">$0</div>
<div class="band tot" style="top:883px;height:26px"></div>
<div class="lbl tot" style="top:883px;height:26px;line-height:28px">Total Operation Expenses</div>
<div class="num tot" style="top:883px;height:26px;line-height:28px;left:259px;padding-right:5.8px">$10,841</div>
<div class="num tot" style="top:883px;height:26px;line-height:28px;left:363px;padding-right:5.8px">$11,367</div>
<div class="num tot" style="top:883px;height:26px;line-height:28px;left:467px;padding-right:5.8px">$11,920</div>
<div class="num tot" style="top:883px;height:26px;line-height:28px;left:571px;padding-right:5.8px">$12,500</div>
<div class="num tot" style="top:883px;height:26px;line-height:28px;left:675px;padding-right:5.8px">$13,109</div>
<div class="num tot" style="top:883px;height:26px;line-height:28px;left:779px;padding-right:5.8px">$12,161</div>
<div class="num tot" style="top:883px;height:26px;line-height:28px;left:883px;padding-right:5.8px">$11,591</div>
<div class="num tot" style="top:883px;height:26px;line-height:28px;left:987px;padding-right:5.8px">$12,185</div>
<div class="num tot" style="top:883px;height:26px;line-height:28px;left:1091px;padding-right:5.8px">$11,691</div>
<div class="num tot" style="top:883px;height:26px;line-height:28px;left:1195px;padding-right:5.8px">$12,881</div>
<div class="num tot" style="top:883px;height:26px;line-height:28px;left:1299px;padding-right:5.8px">$12,408</div>

<!-- header content -->
<div class="abs" style="left:111px;top:235px;font-family:'Liberation Serif',serif;font-size:66px;line-height:74px;color:#555;white-space:nowrap;letter-spacing:1.300px;-webkit-text-stroke:0.800px #555" id="y2020">2020</div>
<div class="abs" style="left:263.500px;top:250px;font-size:16px;line-height:20px;color:#595959;white-space:nowrap;transform:scaleX(0.892);transform-origin:0 0" id="pls">PROFIT AND LOSS STATEMENT</div>
<div class="abs" style="left:378px;top:274px;font-size:25px;line-height:30px;color:#505050;white-space:nowrap" id="devav">DevAV</div>
<div class="abs" style="left:675px;top:208px;width:417px;height:105px;background:#00a0e3"></div>
<div class="abs" style="left:900px;top:211px;width:177px;text-align:right;font-size:14px;line-height:16px;color:#fff;white-space:nowrap;transform:scaleX(0.890);transform-origin:100% 0" id="ni">NET INCOME</div>
<div class="abs" style="left:800px;top:246px;width:271px;text-align:right;font-size:47px;line-height:54px;color:#fff;white-space:nowrap;letter-spacing:-1px;-webkit-text-stroke:1px #00a0e3" id="big">$682,383</div>
<!-- section lines -->
<div class="abs" style="left:45px;top:359px;width:1438px;height:2px;background:#0a9ae2"></div>
<div class="abs" style="left:45px;top:597px;width:1438px;height:2px;background:#d0d0d0"></div>


<!-- vertical scrollbar -->
<div class="abs" style="left:1483px;top:189px;width:17px;height:720px;background:#f0f0f0"></div>
<div class="abs" style="left:1484px;top:190px;width:15px;height:718px;background:#ededed"></div>
<div class="box" style="left:1484px;top:204px;width:15px;height:545px;border-color:#b4b4b4"></div>
<div class="box" style="left:1484px;top:190px;width:15px;height:15px;border-color:#b4b4b4"></div>
<div class="abs" style="left:1487.500px;top:194.500px;width:0;height:0;border-left:4px solid transparent;border-right:4px solid transparent;border-bottom:4.500px solid #333"></div>
<div class="box" style="left:1484px;top:893px;width:15px;height:15px;border-color:#b4b4b4"></div>
<div class="abs" style="left:1487.500px;top:898.500px;width:0;height:0;border-left:4px solid transparent;border-right:4px solid transparent;border-top:4.500px solid #333"></div>
<!-- sheet tab bar -->
<div class="abs" style="left:0;top:909px;width:1500px;height:18px;background:#f0f0f0;border-bottom:1px solid #b8b8b8"></div>
<svg class="abs" style="left:0;top:909px" width="100" height="18" viewBox="0 0 100 18">
  <g fill="#b4b4b4">
    <path d="M8.800 5.500h1.300v7.200h-1.300z M14 5.500v7.200l-4-3.600z M18 5.500v7.200l-4-3.600z"/>
    <path d="M39.200 5.500v7.200l-4.300-3.600z"/>
    <path d="M59.500 5.500v7.200l4.300-3.600z"/>
    <path d="M81 5.500v7.200l4-3.600z M85 5.500v7.200l4-3.600z M89 5.500h1.300v7.200h-1.300z"/>
  </g>
</svg>
<div class="abs" style="left:97px;top:909px;width:102px;height:18px;background:#fff;border:1px solid #b8b8b8;border-top:none"></div>
<div class="abs" style="left:97px;top:910px;width:102px;height:17px;line-height:17px;text-align:center;font-size:12px;color:#d98a57;white-space:nowrap;letter-spacing:-0.170px" id="tabname">Profit and Loss</div>
<div class="abs" style="left:211px;top:916.800px;width:8px;height:2px;background:#222"></div>
<div class="abs" style="left:214px;top:913.800px;width:2px;height:8px;background:#222"></div>
<!-- h scrollbar -->
<div class="abs" style="left:1009px;top:912px;width:2px;height:13px;background:repeating-linear-gradient(#555 0 1px,transparent 1px 2px)"></div>
<div class="abs" style="left:1018px;top:909px;width:465px;height:17px;background:#e9e9e9"></div><div class="abs" style="left:1483px;top:909px;width:17px;height:17px;background:#f7f7f7"></div>
<div class="box" style="left:1018px;top:910px;width:15px;height:15px;border-color:#b4b4b4"></div>
<div class="abs" style="left:1022.500px;top:913.500px;width:0;height:0;border-top:4px solid transparent;border-bottom:4px solid transparent;border-right:4.500px solid #333"></div>
<div class="box" style="left:1033px;top:910px;width:360px;height:15px;border-color:#b4b4b4"></div>
<div class="box" style="left:1467px;top:910px;width:15px;height:15px;border-color:#b4b4b4"></div>
<div class="abs" style="left:1472.500px;top:913.500px;width:0;height:0;border-top:4px solid transparent;border-bottom:4px solid transparent;border-left:4.500px solid #333"></div>
<!-- status bar -->
<div class="abs" style="left:0;top:927px;width:1500px;height:25px;background:#f0f0f0;border-bottom:1px solid #9a9a9a"></div>
<div class="abs" style="left:1311px;top:937.500px;width:8px;height:2px;background:#333"></div>
<div class="abs" style="left:1324px;top:938px;width:116px;height:1.500px;background:#a6a6a6"></div>
<div class="abs" style="left:1380px;top:933px;width:5px;height:12px;background:#444"></div>
<div class="abs" style="left:1445px;top:937.500px;width:8px;height:2px;background:#333"></div>
<div class="abs" style="left:1448px;top:934.500px;width:2px;height:8px;background:#333"></div>
<div class="abs" style="left:1465.500px;top:931.500px;font-size:12px;line-height:16px;color:#404040;white-space:nowrap;letter-spacing:-0.700px" id="pct">100%</div>


<!-- dialog -->
<div class="abs" id="dlg" style="left:583px;top:358px;width:334px;height:243px;background:#f8f8f8;border:1px solid #0072c6;box-shadow:0 3px 12px rgba(0,0,0,0.17)"></div>
<div class="abs" style="left:583px;top:367px;width:334px;text-align:center;font-size:12px;font-weight:bold;line-height:16px;color:#333;white-space:nowrap;letter-spacing:-0.100px" id="dtitle">Encrypt Document</div>
<svg class="abs" style="left:886px;top:368px" width="14" height="14" viewBox="0 0 14 14"><path d="M2.500 2.500l9 9M11.500 2.500l-9 9" stroke="#333" stroke-width="1.300" fill="none"/></svg>
<div class="abs dt" style="left:600px;top:404px" id="d1">Encrypt the contents of this file</div>
<div class="abs dt" style="left:600px;top:433px;letter-spacing:-0.400px" id="d2">Password:</div>
<div class="abs" style="left:658px;top:428px;width:240px;height:22px;background:#fff;border:1px solid #0072c6"></div>
<svg class="abs" style="left:658px;top:428px" width="240" height="22" viewBox="0 0 240 22"><g fill="#3c3c3c"><circle cx="8.60" cy="12" r="2.650"/><circle cx="15.82" cy="12" r="2.650"/><circle cx="23.04" cy="12" r="2.650"/><circle cx="30.26" cy="12" r="2.650"/><circle cx="37.48" cy="12" r="2.650"/><circle cx="44.70" cy="12" r="2.650"/><circle cx="51.92" cy="12" r="2.650"/><circle cx="59.14" cy="12" r="2.650"/><circle cx="66.36" cy="12" r="2.650"/><circle cx="73.58" cy="12" r="2.650"/><circle cx="80.80" cy="12" r="2.650"/><circle cx="88.02" cy="12" r="2.650"/><circle cx="95.24" cy="12" r="2.650"/><circle cx="102.46" cy="12" r="2.650"/></g></svg>
<div class="abs dt" style="left:600px;top:461px;line-height:16px" id="d3">Caution: If you lose or forget the password, it cannot be<br><span style="letter-spacing:-0.090px">recovered. It is advisable to keep a list of passwords and</span><br>their corresponding workbook and sheet names in a<br><span style="letter-spacing:-0.200px">safe place. (Remember that passwords are case-</span><br>sensitive.)</div>
<div class="abs btn" style="left:762px;top:560px">OK</div>
<div class="abs btn" style="left:833px;top:560px">Cancel</div>

</body>
</html>
